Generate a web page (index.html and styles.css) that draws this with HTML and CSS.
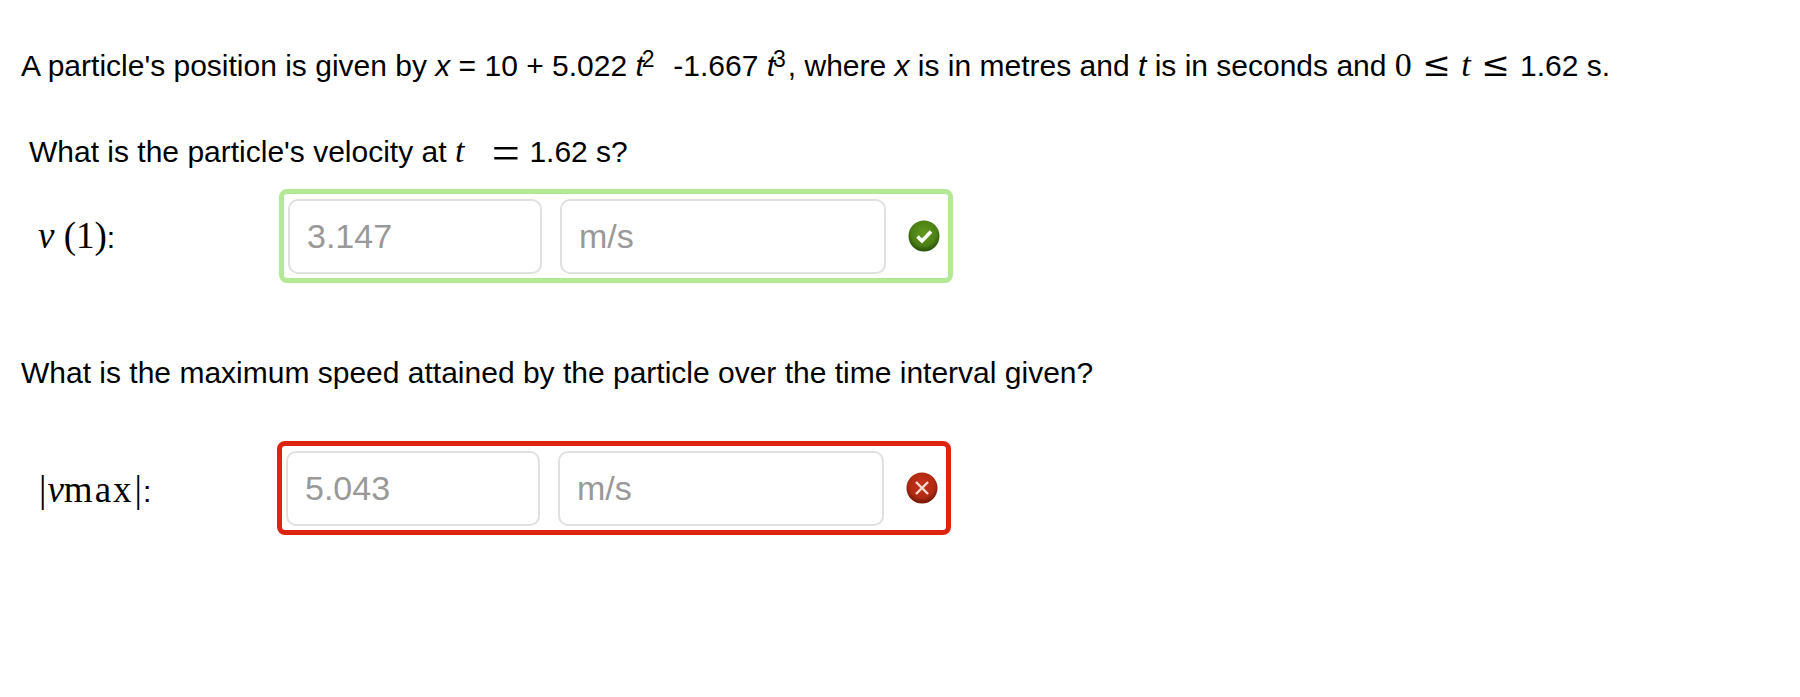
FILE: index.html
```html
<!DOCTYPE html>
<html lang="en">
<head>
    <meta charset="UTF-8">
    <meta name="viewport" content="width=device-width, initial-scale=1.0">
    <title>Particle Position Question</title>
    <link rel="stylesheet" href="styles.css">
</head>
<body>
<div class="question">
    <p class="intro">A particle's position is given by <i>x</i> = 10 + 5.022 <i>t</i><sup class="power">2</sup> &nbsp;-1.667 <i>t</i><sup class="power">3</sup>, where <i>x</i> is in metres and <i>t</i> is in seconds and <span class="math">0 <span class="rel">≤</span> <i>t</i> <span class="rel">≤</span></span> 1.62 s.</p>

    <p class="part-one">What is the particle's velocity at <span class="math"><i>t</i> <span class="eq">=</span></span> 1.62 s?</p>

    <div class="answer-row row-one">
        <div class="answer-label"><span class="math big"><i>v</i> (1)</span>:</div>
        <div class="answer-box correct">
            <input class="field value" type="text" value="3.147" disabled>
            <input class="field unit" type="text" value="m/s" disabled>
            <svg class="status" viewBox="0 0 32 32" aria-label="Correct">
                <defs>
                    <radialGradient id="greenDot" cx="50%" cy="40%" r="55%">
                        <stop offset="0" stop-color="#5f9a1e"/>
                        <stop offset="0.75" stop-color="#4b7f14"/>
                        <stop offset="1" stop-color="#2f5a0c"/>
                    </radialGradient>
                </defs>
                <circle cx="16" cy="16" r="15.5" fill="url(#greenDot)"/>
                <path d="M9.5 16.5l4.5 4.5 9-9.5" fill="none" stroke="#fff" stroke-width="3.6"/>
            </svg>
        </div>
    </div>

    <p class="part-two">What is the maximum speed attained by the particle over the time interval given?</p>

    <div class="answer-row row-two">
        <div class="answer-label"><span class="math big"><span class="bar">|</span><i>v</i><span class="sub">max</span><span class="bar">|</span></span>:</div>
        <div class="answer-box wrong">
            <input class="field value" type="text" value="5.043" disabled>
            <input class="field unit" type="text" value="m/s" disabled>
            <svg class="status" viewBox="0 0 32 32" aria-label="Incorrect">
                <defs>
                    <radialGradient id="redDot" cx="50%" cy="40%" r="55%">
                        <stop offset="0" stop-color="#c8321a"/>
                        <stop offset="0.75" stop-color="#b02a12"/>
                        <stop offset="1" stop-color="#7c1a0a"/>
                    </radialGradient>
                </defs>
                <circle cx="16" cy="16" r="15.5" fill="url(#redDot)"/>
                <path d="M10 10l12 12M22 10L10 22" fill="none" stroke="#f6dcd6" stroke-width="2.4"/>
            </svg>
        </div>
    </div>
</div>
</body>
</html>
```

FILE: styles.css
```css
body {
    margin: 0;
    background-color: #ffffff;
    color: #000;
    font-family: "Liberation Sans", Arial, sans-serif;
    font-size: 30px;
    line-height: 32px;
}
.question {
    padding: 50px 0 0 21px;
}
p {
    margin: 0;
}
.part-one {
    margin: 54px 0 0 8px;
}
.part-two {
    margin-top: 74px;
}
.power {
    font-size: 23px;
    line-height: 0;
    vertical-align: 9px;
    margin: 0 2px 0 -2px;
}
.math {
    font-family: "Liberation Serif", "Times New Roman", serif;
    font-size: 34px;
    line-height: 0;
}
.big {
    font-size: 37px;
}
.rel {
    font-family: "DejaVu Serif", serif;
    font-size: 34px;
    margin: 0 2px;
}
.eq {
    font-size: 50px;
    vertical-align: -8px;
    margin: 0 1px 0 19px;
}
.sub {
    letter-spacing: 2px;
}
.bar {
    font-weight: 100;
    margin: 0 1px;
}
.answer-row {
    display: flex;
    align-items: center;
    margin-left: 17px;
}
.row-one {
    margin-top: 21px;
}
.row-two {
    margin-top: 52px;
}
.row-one .answer-label {
    width: 241px;
    padding-top: 4px;
}
.row-two .answer-label {
    width: 239px;
    padding-top: 8px;
}
.answer-box {
    display: flex;
    align-items: center;
    gap: 18px;
    box-sizing: border-box;
    width: 674px;
    height: 94px;
    padding: 0 4px;
    border: 5px solid;
    border-radius: 8px;
}
.correct {
    border-color: #b3e995;
}
.wrong {
    border-color: #dc2410;
}
.field {
    box-sizing: border-box;
    height: 75px;
    padding: 0 17px;
    border: 2px solid #e0e0e0;
    border-radius: 10px;
    background-color: #fff;
    color: #999;
    font-family: "Liberation Sans", Arial, sans-serif;
    font-size: 34px;
}
.value {
    width: 254px;
}
.unit {
    width: 326px;
}
.status {
    width: 32px;
    height: 32px;
    margin-left: 4px;
    filter: blur(0.6px);
}
```
